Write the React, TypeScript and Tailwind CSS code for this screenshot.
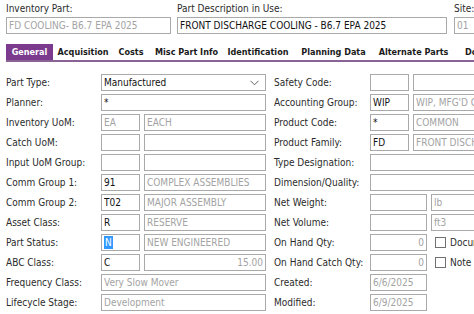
import React from "react";

const FONT = { fontFamily: '"DejaVu Sans Condensed", "DejaVu Sans", Tahoma, sans-serif' };

type BoxProps = {
  w: string;
  v?: string;
  grey?: boolean;
  right?: boolean;
  sel?: boolean;
  chevron?: boolean;
};

function Box({ w, v = "", grey, right, sel, chevron }: BoxProps) {
  return (
    <div
      className={`${w} h-[17px] shrink-0 border border-[#a9a9a9] bg-white flex items-center px-[2px] overflow-hidden whitespace-nowrap ${
        right ? "justify-end" : "justify-start"
      } ${grey ? "text-[#a3a3a3]" : "text-[#111]"}`}
    >
      {sel ? <span className="bg-[#3399ff] text-white px-[1px] leading-[13px]">{v}</span> : <span className="flex-1 overflow-hidden" style={{ textAlign: right ? "right" : "left" }}>{v}</span>}
      {chevron && (
        <svg width="9" height="6" viewBox="0 0 9 6" className="ml-auto mr-[4px] shrink-0">
          <path d="M0.5 0.8 L4.5 4.8 L8.5 0.8" fill="none" stroke="#606060" strokeWidth="1" />
        </svg>
      )}
    </div>
  );
}

function Row({ label, children, lw }: { label: string; children: React.ReactNode; lw: string }) {
  return (
    <div className="flex items-center h-[17px]">
      <div className={`${lw} shrink-0 text-[#2b2b2b] whitespace-nowrap`}>{label}</div>
      <div className="flex items-center gap-[4px]">{children}</div>
    </div>
  );
}

function Check({ label }: { label: string }) {
  return (
    <div className="flex items-center ml-[4px] gap-[4px] whitespace-nowrap">
      <div className="w-[11px] h-[11px] border border-[#707070] bg-white shrink-0" />
      <span className="text-[#2b2b2b]">{label}</span>
    </div>
  );
}

const tabs: { name: string; w: string }[] = [
  { name: "General", w: "w-[47px]" },
  { name: "Acquisition", w: "w-[60px]" },
  { name: "Costs", w: "w-[36px]" },
  { name: "Misc Part Info", w: "w-[75px]" },
  { name: "Identification", w: "w-[68px]" },
  { name: "Planning Data", w: "w-[83px]" },
  { name: "Alternate Parts", w: "w-[77px]" },
];

export default function App() {
  return (
    <div className="w-[474px] h-[314px] overflow-hidden bg-white text-[10px] leading-none" style={FONT}>
      {/* header */}
      <div className="flex gap-[6px] pl-[6px] pt-[4px] w-[600px]">
        <div className="flex flex-col gap-[3px]">
          <div className="text-[#2b2b2b] h-[10px]">Inventory Part:</div>
          <Box w="w-[165px]" v="FD COOLING- B6.7 EPA 2025" grey />
        </div>
        <div className="flex flex-col gap-[3px]">
          <div className="text-[#2b2b2b] h-[10px]">Part Description in Use:</div>
          <Box w="w-[270px]" v="FRONT DISCHARGE COOLING - B6.7 EPA 2025" />
        </div>
        <div className="flex flex-col gap-[3px] ml-[1px]">
          <div className="text-[#2b2b2b] h-[10px]">Site:</div>
          <Box w="w-[60px]" v="01" grey />
        </div>
      </div>

      {/* tabs */}
      <div className="mt-[10px] ml-[6px] w-[600px] flex h-[18px] border-b-2 border-[#8a6296] text-[9px]">
        {tabs.map((t, i) => (
          <div
            key={t.name}
            className={`${t.w} shrink-0 h-[16px] flex items-center justify-center font-bold whitespace-nowrap ${
              i === 0 ? "bg-[#7b3a8e] text-white" : "text-[#1a1a1a]"
            }`}
          >
            {t.name}
          </div>
        ))}
        <div className="h-[16px] flex items-center pl-[13px] font-bold text-[#1a1a1a] whitespace-nowrap">Documents</div>
      </div>

      {/* form */}
      <div className="flex pl-[6px] pt-[12px] w-[640px]">
        <div className="flex flex-col gap-[3px] w-[268px]">
          <Row label="Part Type:" lw="w-[95px]">
            <Box w="w-[165px]" v="Manufactured" chevron />
          </Row>
          <Row label="Planner:" lw="w-[95px]">
            <Box w="w-[165px]" v="*" />
          </Row>
          <Row label="Inventory UoM:" lw="w-[95px]">
            <Box w="w-[39px]" v="EA" grey />
            <Box w="w-[122px]" v="EACH" grey />
          </Row>
          <Row label="Catch UoM:" lw="w-[95px]">
            <Box w="w-[39px]" />
            <Box w="w-[122px]" />
          </Row>
          <Row label="Input UoM Group:" lw="w-[95px]">
            <Box w="w-[39px]" />
            <Box w="w-[122px]" />
          </Row>
          <Row label="Comm Group 1:" lw="w-[95px]">
            <Box w="w-[39px]" v="91" />
            <Box w="w-[122px]" v="COMPLEX ASSEMBLIES" grey />
          </Row>
          <Row label="Comm Group 2:" lw="w-[95px]">
            <Box w="w-[39px]" v="T02" />
            <Box w="w-[122px]" v="MAJOR ASSEMBLY" grey />
          </Row>
          <Row label="Asset Class:" lw="w-[95px]">
            <Box w="w-[39px]" v="R" />
            <Box w="w-[122px]" v="RESERVE" grey />
          </Row>
          <Row label="Part Status:" lw="w-[95px]">
            <Box w="w-[39px]" v="N" sel />
            <Box w="w-[122px]" v="NEW ENGINEERED" grey />
          </Row>
          <Row label="ABC Class:" lw="w-[95px]">
            <Box w="w-[39px]" v="C" />
            <Box w="w-[122px]" v="15.00" grey right />
          </Row>
          <Row label="Frequency Class:" lw="w-[95px]">
            <Box w="w-[165px]" v="Very Slow Mover" grey />
          </Row>
          <Row label="Lifecycle Stage:" lw="w-[95px]">
            <Box w="w-[165px]" v="Development" grey />
          </Row>
        </div>

        <div className="flex flex-col gap-[3px] ml-[0px]">
          <Row label="Safety Code:" lw="w-[96px]">
            <Box w="w-[39px]" />
            <Box w="w-[122px]" />
          </Row>
          <Row label="Accounting Group:" lw="w-[96px]">
            <Box w="w-[39px]" v="WIP" />
            <Box w="w-[122px]" v="WIP, MFG'D COMPONENTS" grey />
          </Row>
          <Row label="Product Code:" lw="w-[96px]">
            <Box w="w-[39px]" v="*" />
            <Box w="w-[122px]" v="COMMON" grey />
          </Row>
          <Row label="Product Family:" lw="w-[96px]">
            <Box w="w-[39px]" v="FD" />
            <Box w="w-[122px]" v="FRONT DISCHARGE" grey />
          </Row>
          <Row label="Type Designation:" lw="w-[96px]">
            <Box w="w-[165px]" />
          </Row>
          <Row label="Dimension/Quality:" lw="w-[96px]">
            <Box w="w-[165px]" />
          </Row>
          <Row label="Net Weight:" lw="w-[96px]">
            <Box w="w-[57px]" />
            <Box w="w-[60px]" v="lb" grey />
          </Row>
          <Row label="Net Volume:" lw="w-[96px]">
            <Box w="w-[57px]" />
            <Box w="w-[60px]" v="ft3" grey />
          </Row>
          <Row label="On Hand Qty:" lw="w-[96px]">
            <Box w="w-[57px]" v="0" grey right />
            <Check label="Documents" />
          </Row>
          <Row label="On Hand Catch Qty:" lw="w-[96px]">
            <Box w="w-[57px]" v="0" grey right />
            <Check label="Note" />
          </Row>
          <Row label="Created:" lw="w-[96px]">
            <Box w="w-[57px]" v="6/6/2025" grey />
          </Row>
          <Row label="Modified:" lw="w-[96px]">
            <Box w="w-[57px]" v="6/9/2025" grey />
          </Row>
        </div>
      </div>
    </div>
  );
}
